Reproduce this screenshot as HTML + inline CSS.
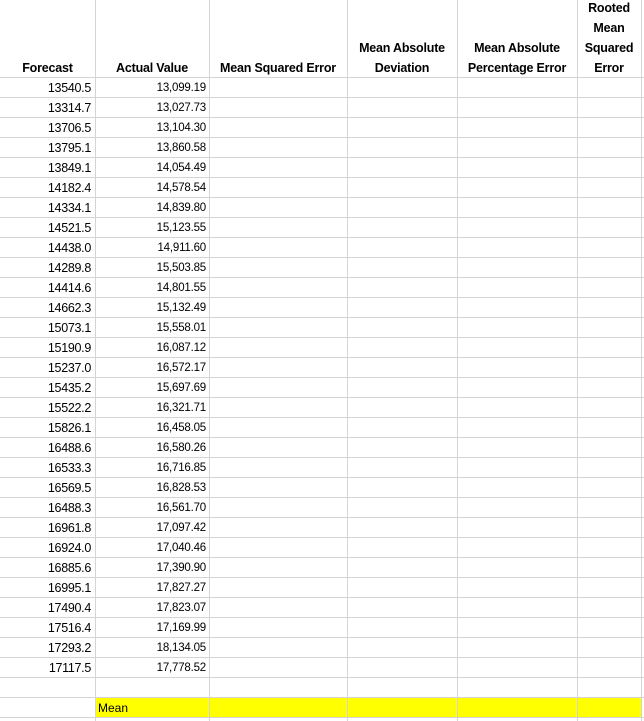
<!DOCTYPE html>
<html><head><meta charset="utf-8"><style>
html,body{margin:0;padding:0;background:#fff;width:644px;height:721px;overflow:hidden;position:relative}
.h,.v{position:absolute;background:#d4d4d4}
.h{left:0;width:644px;height:1px}
.v{top:0;height:721px;width:1px}
.t{position:absolute;font-family:"Liberation Sans",Arial,sans-serif;color:#000;white-space:nowrap;line-height:20px;height:20px}
.hd{position:absolute;bottom:auto;font-family:"Liberation Sans",Arial,sans-serif;font-weight:bold;font-size:12.5px;line-height:20px;text-align:center;letter-spacing:-0.2px}
.f{right:553px;font-size:12.5px;letter-spacing:-0.3px}
.a{right:438px;font-size:11.5px;letter-spacing:-0.2px}
</style></head><body>
<div style="position:absolute;left:96px;top:698px;width:545px;height:19px;background:#ffff00"></div>
<div id="g"></div>
<div class="hd" style="left:0;width:95px;top:58px">Forecast</div>
<div class="hd" style="left:95px;width:114px;top:58px">Actual Value</div>
<div class="hd" style="left:209px;width:138px;top:58px">Mean Squared Error</div>
<div class="hd" style="left:347px;width:110px;top:38px">Mean Absolute<br>Deviation</div>
<div class="hd" style="left:457px;width:120px;top:38px">Mean Absolute<br>Percentage Error</div>
<div class="hd" style="left:577px;width:64px;top:-2px">Rooted<br>Mean<br>Squared<br>Error</div>
<div class="t" style="left:98px;top:698px;font-size:12px">Mean</div>
<script>
var d=[["13540.5","13,099.19"],["13314.7","13,027.73"],["13706.5","13,104.30"],["13795.1","13,860.58"],["13849.1","14,054.49"],["14182.4","14,578.54"],["14334.1","14,839.80"],["14521.5","15,123.55"],["14438.0","14,911.60"],["14289.8","15,503.85"],["14414.6","14,801.55"],["14662.3","15,132.49"],["15073.1","15,558.01"],["15190.9","16,087.12"],["15237.0","16,572.17"],["15435.2","15,697.69"],["15522.2","16,321.71"],["15826.1","16,458.05"],["16488.6","16,580.26"],["16533.3","16,716.85"],["16569.5","16,828.53"],["16488.3","16,561.70"],["16961.8","17,097.42"],["16924.0","17,040.46"],["16885.6","17,390.90"],["16995.1","17,827.27"],["17490.4","17,823.07"],["17516.4","17,169.99"],["17293.2","18,134.05"],["17117.5","17,778.52"]];
var s='';
for(var k=0;k<33;k++)s+='<div class="h" style="top:'+(77+20*k)+'px"></div>';
[95,209,347,457,577,641].forEach(function(x){s+='<div class="v" style="left:'+x+'px"></div>';});
d.forEach(function(r,i){var y=78+20*i;s+='<div class="t f" style="top:'+y+'px">'+r[0]+'</div><div class="t a" style="top:'+y+'px">'+r[1]+'</div>';});
document.getElementById('g').innerHTML=s;
</script>
</body></html>
